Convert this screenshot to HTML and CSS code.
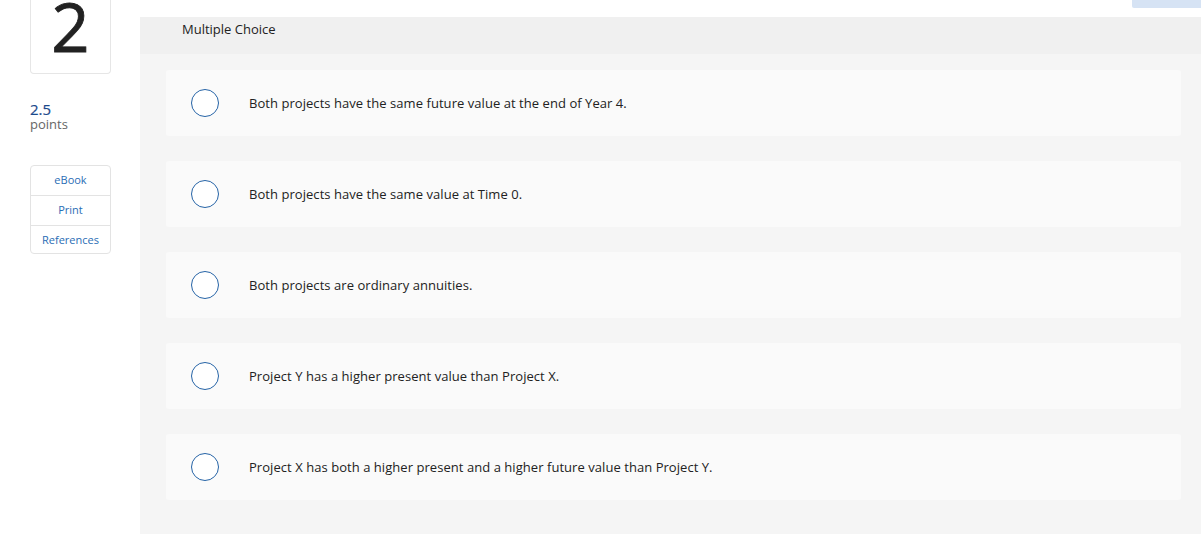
FILE: index.html
```html
<!DOCTYPE html>
<html>
<head>
<meta charset="utf-8">
<link rel="stylesheet" href="styles.css">
</head>
<body>
<div class="topbar"><div class="topbtn"></div></div>
<div class="page">
  <aside class="side">
    <div class="qnum">2</div>
    <div class="pts"><div class="pts-val">2.5</div><div class="pts-lbl">points</div></div>
    <div class="links">
      <a class="link">eBook</a>
      <a class="link">Print</a>
      <a class="link">References</a>
    </div>
  </aside>
  <main class="panel">
    <div class="panel-head">Multiple Choice</div>
    <div class="options">
      <div class="opt"><span class="radio"></span><span class="opt-text">Both projects have the same future value at the end of Year 4.</span></div>
      <div class="opt"><span class="radio"></span><span class="opt-text">Both projects have the same value at Time 0.</span></div>
      <div class="opt"><span class="radio"></span><span class="opt-text">Both projects are ordinary annuities.</span></div>
      <div class="opt"><span class="radio"></span><span class="opt-text">Project Y has a higher present value than Project X.</span></div>
      <div class="opt"><span class="radio"></span><span class="opt-text">Project X has both a higher present and a higher future value than Project Y.</span></div>
    </div>
  </main>
</div>
</body>
</html>
```
FILE: styles.css
```css
html, body { margin: 0; padding: 0; background: #fff; }
body { font-family: "Open Sans", "Liberation Sans", sans-serif; color: #333; width: 1201px; height: 534px; overflow: hidden; position: relative; }
.topbar { position: absolute; top: 0; right: 0; }
.topbtn { width: 69px; height: 8px; background: #d6e3f4; border-bottom-left-radius: 2px; }
.page { display: flex; }
.side { width: 140px; flex: none; padding-left: 30px; box-sizing: border-box; }
.qnum { width: 81px; height: 74px; box-sizing: border-box; border: 1px solid #e6e6e6; border-top: 0; border-radius: 0 0 4px 4px; text-align: center; font-size: 67px; line-height: 52px; color: #222; font-weight: 400; -webkit-text-stroke: 0.8px #222; }
.pts { margin-top: 27px; }
.pts-val { font-size: 15px; line-height: 17px; color: #1c4a8c; font-weight: 500; -webkit-text-stroke: 0.2px #1c4a8c; }
.pts-lbl { font-size: 13px; line-height: 13px; color: #666; }
.links { margin-top: 34px; width: 81px; border: 1px solid #e3e3e3; border-radius: 4px; display: flex; flex-direction: column; box-sizing: border-box; }
.link { display: block; text-align: center; font-size: 11px; color: #2a6db5; height: 29px; line-height: 28px; border-top: 1px solid #e3e3e3; }
.link:first-child { border-top: 0; }
.link:last-child { height: 27px; line-height: 27px; }
.panel { flex: 1; margin-top: 17px; height: 517px; background: #f5f5f5; }
.panel-head { height: 37px; background: #f0f0f0; padding-left: 42px; font-size: 13px; line-height: 25px; color: #222; }
.options { padding: 16px 20px 0 26px; display: flex; flex-direction: column; gap: 25px; }
.opt { height: 66px; background: #fafafa; border-radius: 3px; display: flex; align-items: center; padding-left: 25px; }
.radio { width: 28px; height: 28px; box-sizing: border-box; border: 1.5px solid #2563a6; border-radius: 50%; background: #fff; flex: none; }
.opt-text { margin-left: 30px; font-size: 13px; letter-spacing: 0.05px; color: #222; }
```
